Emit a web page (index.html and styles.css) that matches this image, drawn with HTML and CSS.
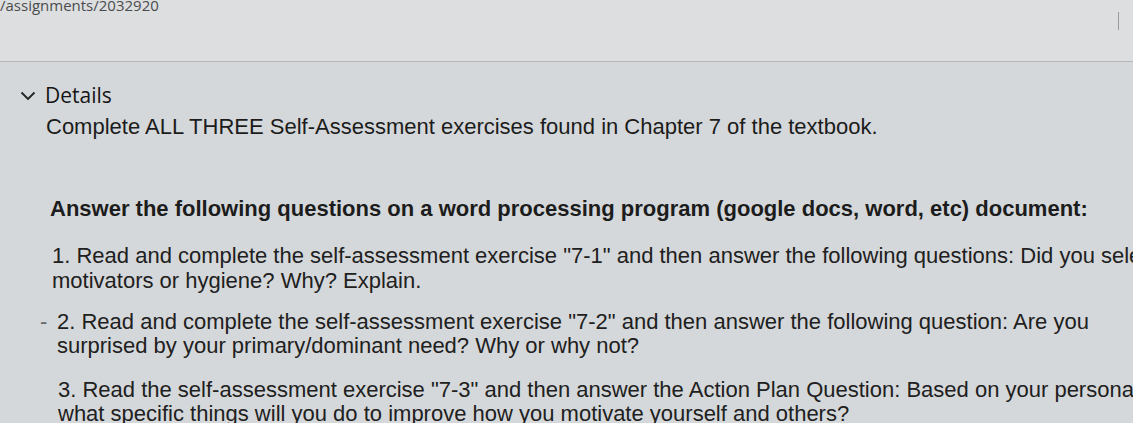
FILE: index.html
```html
<!DOCTYPE html>
<html lang="en">

<head>
    <meta charset="UTF-8">
    <title>Assignment Details</title>
    <link rel="stylesheet" href="styles.css">
</head>

<body>
    <div class="top_bar">
        <span class="url">/assignments/2032920</span>
        <span class="bar_mark"></span>
    </div>

    <div class="details">
        <div class="details_head">
            <svg class="chevron" width="16" height="10" viewBox="0 0 16 10">
                <path d="M1.5 1.5 L8 8 L14.5 1.5" fill="none" stroke="#222" stroke-width="1.8" />
            </svg>
            <span>Details</span>
        </div>

        <div class="details_body">
            <p class="intro">Complete ALL THREE Self-Assessment exercises found in Chapter 7 of the textbook.</p>

            <p class="answer">Answer the following questions on a word processing program (google docs, word, etc) document:</p>

            <p class="q q1">1. Read and complete the self-assessment exercise "7-1" and then answer the following questions: Did you select<br>
                motivators or hygiene? Why? Explain.</p>

            <p class="q q2"><span class="dash">-</span>2. Read and complete the self-assessment exercise "7-2" and then answer the following question: Are you<br>
                surprised by your primary/dominant need? Why or why not?</p>

            <p class="q q3">3. Read the self-assessment exercise "7-3" and then answer the Action Plan Question: Based on your personal results,<br>
                what specific things will you do to improve how you motivate yourself and others?</p>
        </div>
    </div>
</body>

</html>
```

FILE: styles.css
```css
* {
    margin: 0px;
    padding: 0px;
    box-sizing: border-box;
}

body {
    width: 1133px;
    height: 423px;
    overflow: hidden;
    background: #d5d8da;
    color: #1c1c1c;
    font-family: "Liberation Sans", Arial, sans-serif;
}

.top_bar {
    height: 62px;
    background: #dcdedf;
    border-bottom: 1px solid #b4b6b8;
    display: flex;
    justify-content: space-between;
    align-items: flex-start;
}

.url {
    font-family: "Open Sans", "Noto Sans", sans-serif;
    font-size: 15px;
    color: #4a4c4e;
    line-height: 14px;
    margin-top: -2px;
}

.bar_mark {
    width: 1px;
    height: 18px;
    background: #9a9c9e;
    margin-top: 12px;
    margin-right: 14px;
}

.details {
    padding-left: 20px;
    padding-top: 19px;
}

.details_head {
    display: flex;
    align-items: center;
    gap: 9px;
    font-family: "Open Sans", "Noto Sans", sans-serif;
    font-size: 21px;
    color: #151515;
    height: 28px;
}

.chevron {
    margin-top: 2px;
}

.details_body {
    padding-left: 26px;
}

.intro {
    font-size: 22px;
    margin-top: 4px;
    line-height: 28px;
    white-space: nowrap;
}

.answer {
    font-size: 22px;
    font-weight: bold;
    margin-top: 55px;
    margin-left: 4px;
    line-height: 26px;
    white-space: nowrap;
}

.q {
    font-size: 22px;
    line-height: 24px;
    white-space: nowrap;
    color: #202020;
}

.q1 {
    margin-top: 21px;
    margin-left: 6px;
    line-height: 25px;
}

.q2 {
    margin-top: 17px;
    margin-left: 11px;
    position: relative;
}

.dash {
    position: absolute;
    left: -17px;
    color: #666;
}

.q3 {
    margin-top: 20px;
    margin-left: 12px;
    border-bottom: 1px solid #9a9a9a;
}
```
